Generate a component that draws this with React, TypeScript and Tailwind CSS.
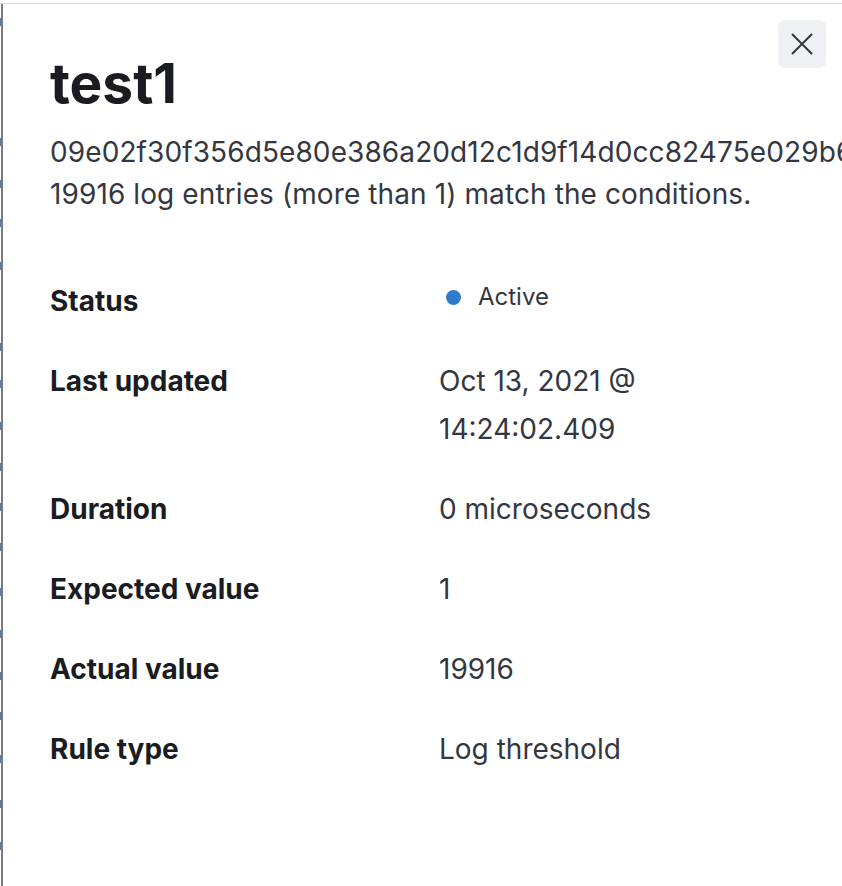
const rows: { label: string; value: string[] }[] = [
  { label: 'Last updated', value: ['Oct 13, 2021 @', '14:24:02.409'] },
  { label: 'Duration', value: ['0 microseconds'] },
  { label: 'Expected value', value: ['1'] },
  { label: 'Actual value', value: ['19916'] },
  { label: 'Rule type', value: ['Log threshold'] },
]

// bits of the page underneath that peek out on the left edge
const peeks = [18, 138, 180, 219, 262, 343, 380, 422, 463, 503, 543, 588, 630, 672, 712, 755, 800, 842]

function EdgeStrip() {
  return (
    <svg width="1" height="882" className="shrink-0 block">
      {peeks.map((y) => (
        <rect key={y} x="0" y={y - 4} width="1" height="8" fill="#2c5a8f" opacity="0.8" />
      ))}
    </svg>
  )
}

export default function App() {
  return (
    <div className="w-[842px] h-[886px] bg-white overflow-hidden flex flex-col font-['Inter','Liberation_Sans',sans-serif]">
      <div className="h-[3px] shrink-0" />
      <div className="h-px bg-[#d3dae6] shrink-0" />
      <div className="flex flex-1 min-h-0">
        <EdgeStrip />
        <div className="w-[2px] bg-[#7b7b7b] shrink-0" />
        <div className="relative flex-1 min-w-0 pl-[47px] pt-[47px]">
          <button className="absolute top-[16px] right-[16px] w-12 h-12 rounded-[7px] bg-[#eff0f3] flex items-center justify-center">
            <svg width="22" height="22" viewBox="0 0 22 22" fill="none" stroke="#343741" strokeWidth="2" strokeLinecap="round">
              <path d="M1.5 1.5l19 19M20.5 1.5l-19 19" />
            </svg>
          </button>

          <h1 className="text-[55px] leading-[64px] font-bold text-[#1a1c21]">test1</h1>

          <div className="mt-[16px] text-[28px] leading-[42px] text-[#343741] whitespace-nowrap tracking-[0.1px]">
            <p>09e02f30f356d5e80e386a20d12c1d9f14d0cc82475e029b6a9c1a3</p>
            <p>19916 log entries (more than 1) match the conditions.</p>
          </div>

          <dl className="mt-[62px] grid grid-cols-[389px_1fr] gap-y-[32px] text-[28px] leading-[48px]">
            <dt className="font-bold text-[#1a1c21]">Status</dt>
            <dd className="flex items-center gap-[17px] pl-[7px] -mt-[4px] h-[48px] text-[#343741] text-[24px]">
              <span className="w-[15px] h-[15px] rounded-full bg-[#3179cc]" />
              Active
            </dd>
            {rows.map((r) => (
              <div key={r.label} className="contents">
                <dt className="font-bold text-[#1a1c21]">{r.label}</dt>
                <dd className="text-[#343741]">
                  {r.value.map((v) => (
                    <div key={v}>{v}</div>
                  ))}
                </dd>
              </div>
            ))}
          </dl>
        </div>
      </div>
    </div>
  )
}
